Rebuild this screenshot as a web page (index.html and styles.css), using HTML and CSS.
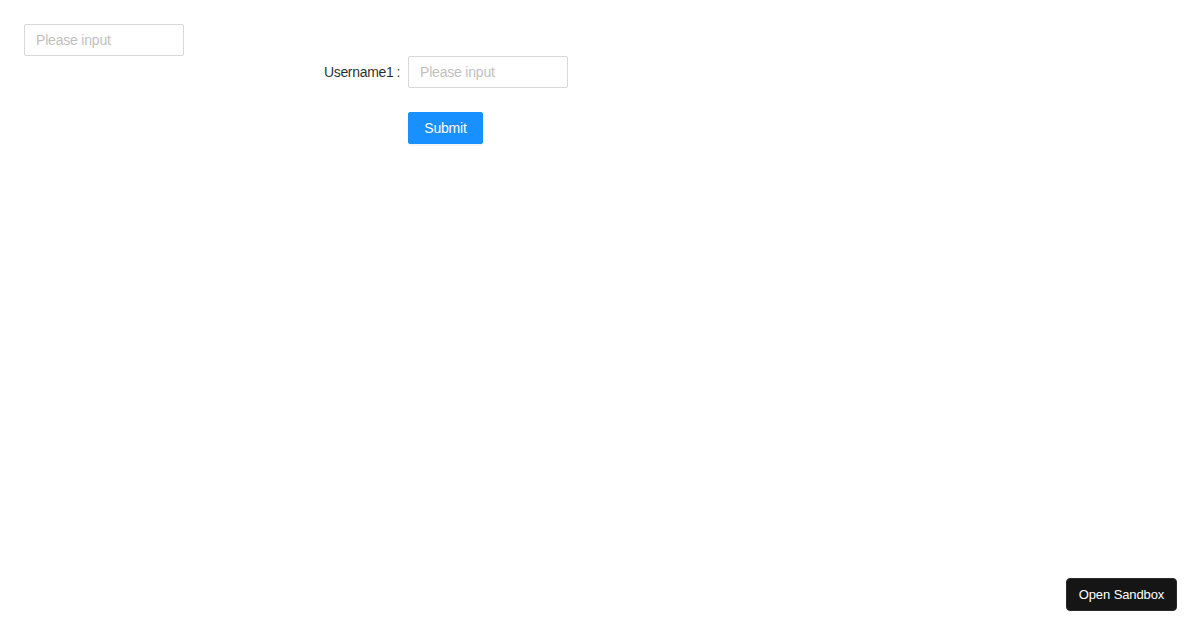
FILE: index.html
```html
<!DOCTYPE html>
<html>
<head>
<meta charset="utf-8">
<link rel="stylesheet" href="styles.css">
</head>
<body>
<div class="page">
  <input class="input" placeholder="Please input">
  <form class="form">
    <div class="row item">
      <div class="label-col"><label class="label">Username1</label></div>
      <div class="control-col"><input class="input" placeholder="Please input"></div>
    </div>
    <div class="row">
      <div class="label-col"></div>
      <div class="control-col"><button type="button" class="btn-primary">Submit</button></div>
    </div>
  </form>
</div>
<button type="button" class="sandbox">Open Sandbox</button>
</body>
</html>
```
FILE: styles.css
```css
html, body {
  margin: 0;
  padding: 0;
  background: #fff;
}
body {
  font-family: "Liberation Sans", Arial, sans-serif;
  font-size: 14px;
  color: rgba(0,0,0,0.85);
  width: 1200px;
  height: 630px;
  position: relative;
}
.page {
  padding: 24px;
  letter-spacing: -0.2px;
}
.input {
  box-sizing: border-box;
  display: block;
  width: 160px;
  height: 32px;
  padding: 4px 11px;
  border: 1px solid #d9d9d9;
  border-radius: 2px;
  font-family: inherit;
  font-size: 14px;
  letter-spacing: -0.2px;
  color: rgba(0,0,0,0.85);
  outline: none;
  margin: 0;
}
.input::placeholder {
  color: #bfbfbf;
}
.form {
  margin: 0;
}
.row {
  display: flex;
}
.item {
  margin-bottom: 24px;
}
.label-col {
  width: 384px;
  flex: none;
  text-align: right;
}
.control-col {
  flex: 1;
}
.label {
  display: inline-flex;
  align-items: center;
  height: 32px;
  letter-spacing: -0.32px;
  color: rgba(0,0,0,0.85);
}
.label::after {
  content: ":";
  margin: 0 8px 0 3px;
}
.btn-primary {
  box-sizing: border-box;
  width: 75px;
  height: 32px;
  padding: 4px 0;
  border: 1px solid #1890ff;
  background: #1890ff;
  color: #fff;
  border-radius: 2px;
  font-family: inherit;
  font-size: 14px;
  letter-spacing: -0.2px;
  box-shadow: 0 2px 0 rgba(0,0,0,0.045);
  text-shadow: 0 -1px 0 rgba(0,0,0,0.12);
  cursor: pointer;
}
.sandbox {
  position: absolute;
  right: 23px;
  bottom: 19px;
  width: 111px;
  height: 33px;
  padding: 0;
  background: #151515;
  color: #fff;
  border: 1px solid #2a2a2a;
  border-radius: 4px;
  font-family: "Liberation Sans", Arial, sans-serif;
  font-size: 13px;
  letter-spacing: -0.1px;
}
```
